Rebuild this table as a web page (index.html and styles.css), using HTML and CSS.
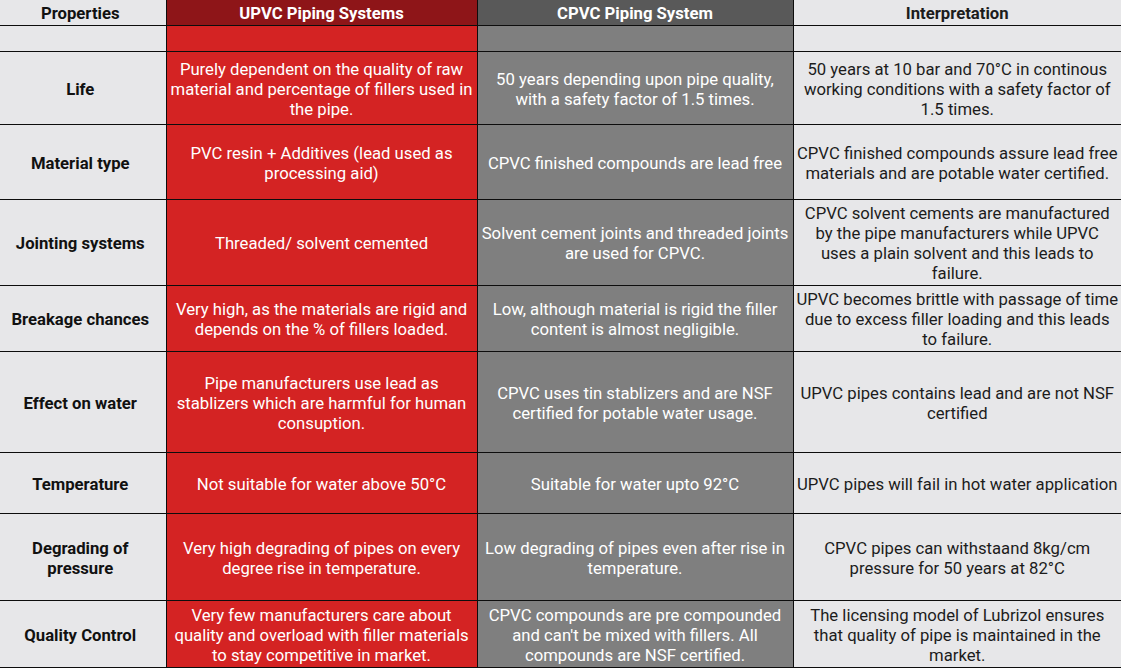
FILE: index.html
```html
<!DOCTYPE html>
<html lang="en">
<head>
<meta charset="utf-8">
<title>UPVC vs CPVC</title>
<link rel="stylesheet" href="styles.css">
</head>
<body>
<table class="cmp">
  <colgroup>
    <col class="c1"><col class="c2"><col class="c3"><col class="c4">
  </colgroup>
  <thead>
    <tr class="r-head">
      <th class="prop">Properties</th>
      <th class="upvc-h">UPVC Piping Systems</th>
      <th class="cpvc-h">CPVC Piping System</th>
      <th class="interp">Interpretation</th>
    </tr>
  </thead>
  <tbody>
    <tr class="r-empty">
      <td class="prop"></td><td class="upvc"></td><td class="cpvc"></td><td class="interp"></td>
    </tr>
    <tr class="r-life">
      <td class="prop">Life</td>
      <td class="upvc">Purely dependent on the quality of raw<br>material and percentage of fillers used in<br>the pipe.</td>
      <td class="cpvc">50 years depending upon pipe quality,<br>with a safety factor of 1.5 times.</td>
      <td class="interp">50 years at 10 bar and 70°C in continous<br>working conditions with a safety factor of<br>1.5 times.</td>
    </tr>
    <tr class="r-mat">
      <td class="prop">Material type</td>
      <td class="upvc">PVC resin + Additives (lead used as<br>processing aid)</td>
      <td class="cpvc">CPVC finished compounds are lead free</td>
      <td class="interp">CPVC finished compounds assure lead free<br>materials and are potable water certified.</td>
    </tr>
    <tr class="r-joint">
      <td class="prop">Jointing systems</td>
      <td class="upvc">Threaded/ solvent cemented</td>
      <td class="cpvc">Solvent cement joints and threaded joints<br>are used for CPVC.</td>
      <td class="interp">CPVC solvent cements are manufactured<br>by the pipe manufacturers while UPVC<br>uses a plain solvent and this leads to<br>failure.</td>
    </tr>
    <tr class="r-break">
      <td class="prop">Breakage chances</td>
      <td class="upvc">Very high, as the materials are rigid and<br>depends on the % of fillers loaded.</td>
      <td class="cpvc">Low, although material is rigid the filler<br>content is almost negligible.</td>
      <td class="interp">UPVC becomes brittle with passage of time<br>due to excess filler loading and this leads<br>to failure.</td>
    </tr>
    <tr class="r-water">
      <td class="prop">Effect on water</td>
      <td class="upvc">Pipe manufacturers use lead as<br>stablizers which are harmful for human<br>consuption.</td>
      <td class="cpvc">CPVC uses tin stablizers and are NSF<br>certified for potable water usage.</td>
      <td class="interp">UPVC pipes contains lead and are not NSF<br>certified</td>
    </tr>
    <tr class="r-temp">
      <td class="prop">Temperature</td>
      <td class="upvc">Not suitable for water above 50°C</td>
      <td class="cpvc">Suitable for water upto 92°C</td>
      <td class="interp">UPVC pipes will fail in hot water application</td>
    </tr>
    <tr class="r-degr">
      <td class="prop">Degrading of<br>pressure</td>
      <td class="upvc">Very high degrading of pipes on every<br>degree rise in temperature.</td>
      <td class="cpvc">Low degrading of pipes even after rise in<br>temperature.</td>
      <td class="interp">CPVC pipes can withstaand 8kg/cm<br>pressure for 50 years at 82°C</td>
    </tr>
    <tr class="r-qc">
      <td class="prop">Quality Control</td>
      <td class="upvc">Very few manufacturers care about<br>quality and overload with filler materials<br>to stay competitive in market.</td>
      <td class="cpvc">CPVC compounds are pre compounded<br>and can't be mixed with fillers. All<br>compounds are NSF certified.</td>
      <td class="interp">The licensing model of Lubrizol ensures<br>that quality of pipe is maintained in the<br>market.</td>
    </tr>
    <tr class="r-more">
      <td class="prop"></td><td class="upvc"></td><td class="cpvc"></td><td class="interp"></td>
    </tr>
  </tbody>
</table>
</body>
</html>
```

FILE: styles.css
```css
html, body {
  margin: 0;
  padding: 0;
  background: #ffffff;
  overflow: hidden;
}

.cmp {
  width: 1121px;
  border-collapse: collapse;
  table-layout: fixed;
  font-family: Roboto, "Liberation Sans", Arial, sans-serif;
  font-size: 16.7px;
  line-height: 20px;
}

.c1 { width: 166px; }
.c2 { width: 311px; }
.c3 { width: 316px; }
.c4 { width: 328px; }

.cmp th,
.cmp td {
  border: 1px solid #0d0d0d;
  padding: 4px 2px 0;
  text-align: center;
  vertical-align: middle;
  overflow: hidden;
  white-space: nowrap;
}

.cmp tr > :first-child { border-left: none; }
.cmp tr > :last-child { border-right: none; }
.cmp thead th { border-top: none; }

.cmp th { font-weight: 700; }

.cmp .prop {
  background: #e7e7e9;
  color: #111111;
  font-weight: 700;
  padding-left: 0;
  padding-right: 5px;
}

.interp {
  background: #e7e7e9;
  color: #1c1c1c;
}

.upvc-h {
  background: #8e1518;
  color: #ffffff;
}

.cpvc-h {
  background: #595959;
  color: #ffffff;
}

.upvc {
  background: #d42323;
  color: #ffffff;
}

.cpvc {
  background: #7f7f7f;
  color: #ffffff;
}

.r-head { height: 25px; }
.r-empty { height: 26px; }
.r-life { height: 73px; }
.r-mat { height: 75px; }
.r-joint { height: 86px; }
.r-break { height: 66px; }
.r-water { height: 101px; }
.r-temp { height: 61px; }
.r-degr { height: 87px; }
.r-qc { height: 67px; }
.r-more { height: 40px; }
```
